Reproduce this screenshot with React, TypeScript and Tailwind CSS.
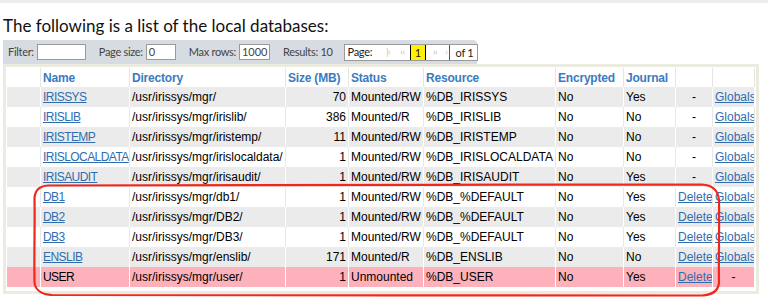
import React from 'react';

interface Db {
  name: string;
  dir: string;
  size: number;
  status: string;
  resource: string;
  encrypted: string;
  journal: string;
  canDelete: boolean;
  globals: boolean;
  link: boolean;
  warn?: boolean;
}

const rows: Db[] = [
  { name: 'IRISSYS', dir: '/usr/irissys/mgr/', size: 70, status: 'Mounted/RW', resource: '%DB_IRISSYS', encrypted: 'No', journal: 'Yes', canDelete: false, globals: true, link: true },
  { name: 'IRISLIB', dir: '/usr/irissys/mgr/irislib/', size: 386, status: 'Mounted/R', resource: '%DB_IRISLIB', encrypted: 'No', journal: 'No', canDelete: false, globals: true, link: true },
  { name: 'IRISTEMP', dir: '/usr/irissys/mgr/iristemp/', size: 11, status: 'Mounted/RW', resource: '%DB_IRISTEMP', encrypted: 'No', journal: 'No', canDelete: false, globals: true, link: true },
  { name: 'IRISLOCALDATA', dir: '/usr/irissys/mgr/irislocaldata/', size: 1, status: 'Mounted/RW', resource: '%DB_IRISLOCALDATA', encrypted: 'No', journal: 'No', canDelete: false, globals: true, link: true },
  { name: 'IRISAUDIT', dir: '/usr/irissys/mgr/irisaudit/', size: 1, status: 'Mounted/RW', resource: '%DB_IRISAUDIT', encrypted: 'No', journal: 'Yes', canDelete: false, globals: true, link: true },
  { name: 'DB1', dir: '/usr/irissys/mgr/db1/', size: 1, status: 'Mounted/RW', resource: '%DB_%DEFAULT', encrypted: 'No', journal: 'Yes', canDelete: true, globals: true, link: true },
  { name: 'DB2', dir: '/usr/irissys/mgr/DB2/', size: 1, status: 'Mounted/RW', resource: '%DB_%DEFAULT', encrypted: 'No', journal: 'Yes', canDelete: true, globals: true, link: true },
  { name: 'DB3', dir: '/usr/irissys/mgr/DB3/', size: 1, status: 'Mounted/RW', resource: '%DB_%DEFAULT', encrypted: 'No', journal: 'Yes', canDelete: true, globals: true, link: true },
  { name: 'ENSLIB', dir: '/usr/irissys/mgr/enslib/', size: 171, status: 'Mounted/R', resource: '%DB_ENSLIB', encrypted: 'No', journal: 'No', canDelete: true, globals: true, link: true },
  { name: 'USER', dir: '/usr/irissys/mgr/user/', size: 1, status: 'Unmounted', resource: '%DB_USER', encrypted: 'No', journal: 'Yes', canDelete: true, globals: false, link: false, warn: true },
];

const headers = ['', 'Name', 'Directory', 'Size (MB)', 'Status', 'Resource', 'Encrypted', 'Journal', '', ''];
const widths = [34, 89, 156, 63, 75, 132, 68, 52, 37, 42];

function Field({ label, value, width }: { label: string; value: string; width: string }) {
  return (
    <div className="flex shrink-0 items-center gap-[3px] whitespace-nowrap">
      <span>{label}</span>
      <div className={`h-[16px] ${width} border border-[#9a9a9a] bg-white px-[2px] leading-[14px] tracking-normal`}>{value}</div>
    </div>
  );
}

export default function App() {
  return (
    <div className="relative h-[301px] w-[768px] overflow-hidden bg-white" style={{ fontFamily: 'Lato, sans-serif' }}>
      <div className="h-[3px] w-full bg-[#ededed]" />
      <div className="px-[3px]">
        <h1 className="mt-[12px] h-[25px] whitespace-nowrap text-[17px] leading-[22px] text-[#111]">The following is a list of the local databases:</h1>

        <div className="flex h-[24px] w-[474px] items-center gap-[13px] whitespace-nowrap rounded-tr-[4px] bg-[#d6dce2] pl-[5px] text-[11px] tracking-[-0.3px] text-[#444]">
          <Field label="Filter:" value="" width="w-[49px]" />
          <Field label="Page size:" value="0" width="w-[30px]" />
          <Field label="Max rows:" value="1000" width="w-[31px]" />
          <span className="shrink-0">Results: 10</span>
          <div className="-ml-[2px] flex h-[17px] shrink-0 items-center border border-[#9a9a9a] bg-white pl-[3px] text-[#222]">
            <span>Page:</span>
            <span className="ml-[14px] text-[9px] text-[#bbb]">|‹</span>
            <span className="ml-[10px] text-[9px] text-[#bbb]">‹‹</span>
            <span className="ml-[5px] h-full border-x border-black bg-[#fff200] px-[4px] leading-[15px]">1</span>
            <span className="ml-[7px] text-[9px] text-[#bbb]">››</span>
            <span className="ml-[8px] text-[9px] text-[#bbb]">›</span>
            <span className="ml-[1px] h-full border-l border-[#555] pl-[6px] pr-[4px] leading-[15px]">of 1</span>
          </div>
        </div>

        <div className="w-[756px] border-[3px] border-[#ecebe0] bg-white p-[1px] pb-[4px]">
          <table className="table-fixed border-separate border-spacing-0 text-[12px] text-black" style={{ fontFamily: '"Liberation Sans", Arial, sans-serif', width: 748 }}>
            <colgroup>
              {widths.map((w, i) => (
                <col key={i} style={{ width: w }} />
              ))}
            </colgroup>
            <thead>
              <tr className="h-[19px]">
                {headers.map((h, i) => (
                  <th key={i} className="overflow-hidden whitespace-nowrap border-r border-[#e6e6e0] px-[2px] text-left align-middle font-bold tracking-[-0.2px] text-[#3a7bbf]">
                    {h}
                  </th>
                ))}
              </tr>
            </thead>
            <tbody>
              {rows.map((r, i) => {
                const gray = i % 2 === 0;
                const bg = r.warn ? 'bg-[#fdb2bb]' : gray ? 'bg-[#ebebeb]' : 'bg-white';
                const sep = r.warn || gray ? 'border-white' : 'border-[#e8e8e4]';
                const cell = `h-[20px] overflow-hidden border-r ${sep} px-[2px] align-middle whitespace-nowrap`;
                const link = 'text-[#2f6db0] underline';
                return (
                  <tr key={r.name} className={bg}>
                    <td className={cell}></td>
                    <td className={`${cell} tracking-[-0.55px]`}>{r.link ? <a className={link}>{r.name}</a> : r.name}</td>
                    <td className={cell}>{r.dir}</td>
                    <td className={`${cell} text-right`}>{r.size}</td>
                    <td className={cell}>{r.status}</td>
                    <td className={cell}>{r.resource}</td>
                    <td className={cell}>{r.encrypted}</td>
                    <td className={cell}>{r.journal}</td>
                    <td className={`${cell} text-center`}>{r.canDelete ? <a className={link}>Delete</a> : '-'}</td>
                    <td className={`${cell} text-center`}>{r.globals ? <a className={link}>Globals</a> : '-'}</td>
                  </tr>
                );
              })}
            </tbody>
          </table>
        </div>
      </div>

      <svg className="pointer-events-none absolute left-0 top-0" width="768" height="301" viewBox="0 0 768 301">
        <path
          d="M48 185.5 C200 184.5 500 185 702 184.5 C712 185 718 190 719 200 C719.5 230 718.5 260 719 283 C718 291 712 295 702 295.5 C500 295 250 296 52 295 C42 294.5 35 290 34.5 282 C34 255 35 225 34.5 198 C35 190 40 186 48 185.5 Z"
          fill="none"
          stroke="#f0281c"
          strokeWidth="2.2"
        />
      </svg>
    </div>
  );
}
